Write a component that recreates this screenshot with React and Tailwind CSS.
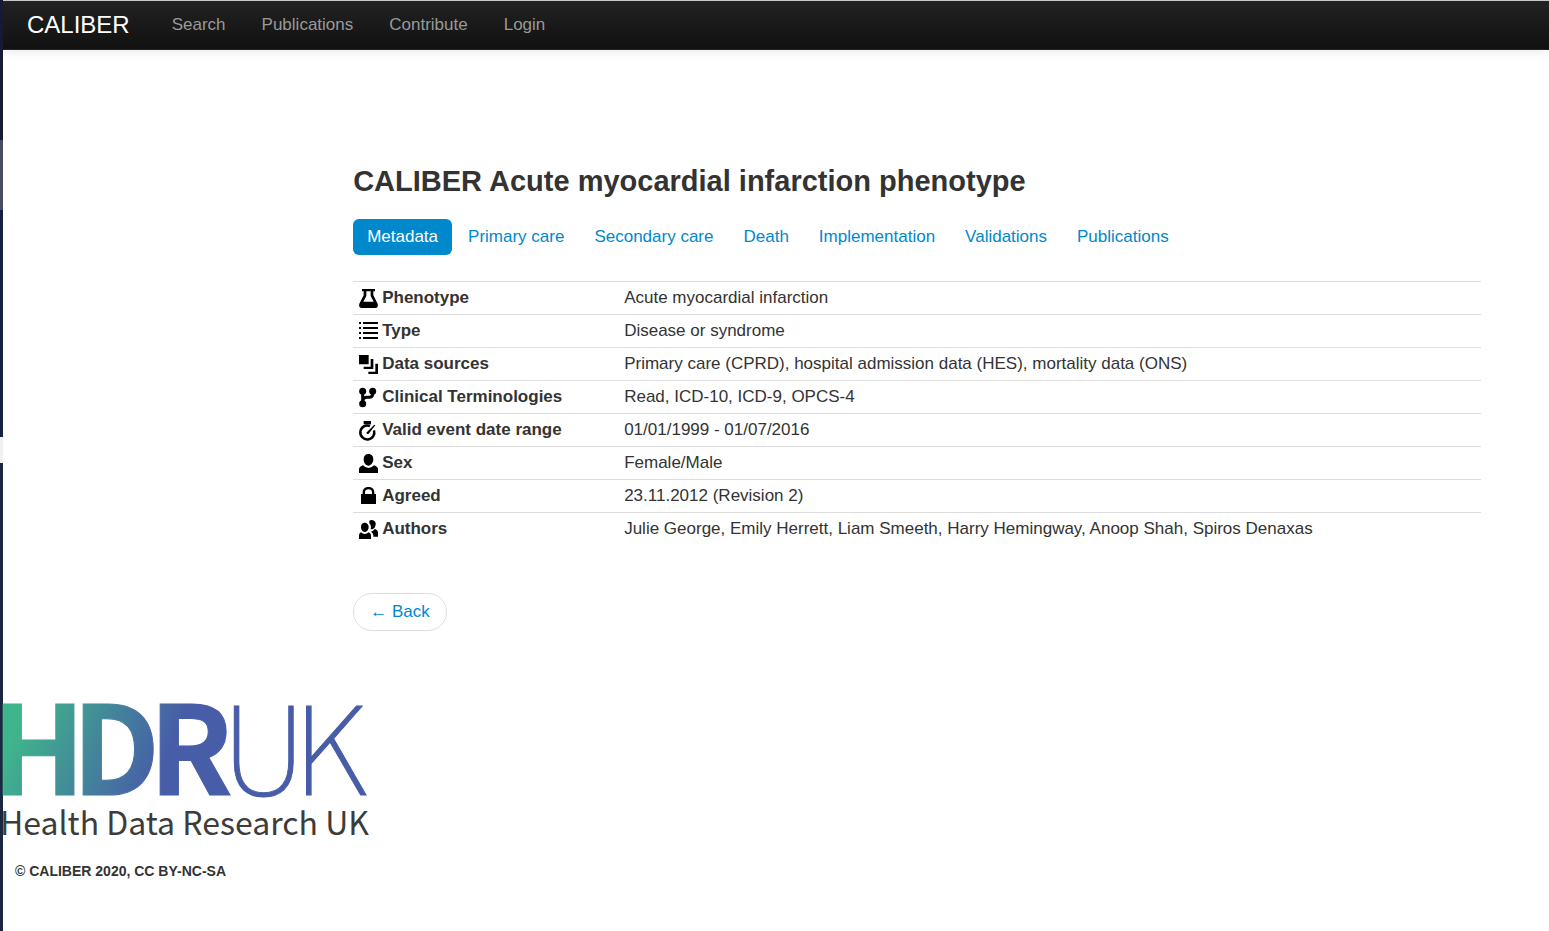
const navLinks = ["Search", "Publications", "Contribute", "Login"];

const tabs = [
  "Metadata",
  "Primary care",
  "Secondary care",
  "Death",
  "Implementation",
  "Validations",
  "Publications",
];

const icons = {
  beaker: (
    <path
      fillRule="evenodd"
      d="M9 0H48V7H43V19L56 44Q59 57 48 57H9Q-2 57 1 44L14 19V7H9ZM22 7V21L13 38H44L35 21V7Z"
    />
  ),
  list: (
    <path d="M0 0h6v6H0zM12 0h45v6H12zM0 15h6v6H0zM12 15h45v6H12zM0 30h6v6H0zM12 30h45v6H12zM0 45h6v6H0zM12 45h45v6H12z" />
  ),
  layers: <path d="M0 0H29V28H0ZM35 12H43V42H14V35H35ZM49 26H57V57H28V50H49Z" />,
  fork: (
    <g>
      <circle cx="11" cy="10" r="10.500" />
      <circle cx="41" cy="10" r="10.500" />
      <circle cx="11" cy="47" r="10.500" />
      <path d="M11 10V47M41 10V18Q41 28 31 28H22Q12 29 11 40" fill="none" stroke="#000" strokeWidth="9" />
    </g>
  ),
  timer: (
    <g>
      <path d="M14 0H36V10H14Z" />
      <path d="M33 15A21 21 0 1 0 45 28" fill="none" stroke="#000" strokeWidth="7.500" />
      <path d="M22 35L46 11L49 13L29 38Q24 41 22 35Z" />
    </g>
  ),
  user: (
    <path d="M28.500 0C38 0 43 7 43 16S37 35 28.500 35S14 26 14 16S19 0 28.500 0ZM12 34Q19 42 28.500 42T45 34Q57 38 57 46V57H0V46Q0 38 12 34Z" />
  ),
  lock: (
    <path
      fillRule="evenodd"
      d="M6 21H11V16C11 5 19 0 28.500 0S46 5 46 16V21H51V51H6ZM18 21H39V16C39 9 34 7 28.500 7S18 9 18 16Z"
    />
  ),
  people: (
    <path d="M17 8C24 8 29 13 29 21S24 36 17 36S6 29 6 21S10 8 17 8ZM6 37Q11 42 17 42T29 37Q36 40 36 46V57H0V46Q0 40 6 37ZM31 2Q36 -1 42 1C49 3 51 9 50 15Q48 25 41 28L35 28Q38 17 31 10ZM47 27Q57 30 57 38V50H43V46Q42 39 36 35Q43 33 47 27Z" />
  ),
};

const rows = [
  { icon: "beaker", label: "Phenotype", value: "Acute myocardial infarction" },
  { icon: "list", label: "Type", value: "Disease or syndrome" },
  {
    icon: "layers",
    label: "Data sources",
    value: "Primary care (CPRD), hospital admission data (HES), mortality data (ONS)",
  },
  { icon: "fork", label: "Clinical Terminologies", value: "Read, ICD-10, ICD-9, OPCS-4" },
  { icon: "timer", label: "Valid event date range", value: "01/01/1999 - 01/07/2016" },
  { icon: "user", label: "Sex", value: "Female/Male" },
  { icon: "lock", label: "Agreed", value: "23.11.2012 (Revision 2)" },
  {
    icon: "people",
    label: "Authors",
    value:
      "Julie George, Emily Herrett, Liam Smeeth, Harry Hemingway, Anoop Shah, Spiros Denaxas",
  },
];

function Icon({ name }) {
  return (
    <svg viewBox="0 0 57 57" className="h-[19px] w-[19px] shrink-0 overflow-visible" aria-hidden="true">
      {icons[name]}
    </svg>
  );
}

function EdgeStrip() {
  return (
    <div className="flex w-[3px] shrink-0 flex-col bg-[#1b2741]" aria-hidden="true">
      <div className="h-[140px] bg-[#161c38]" />
      <div className="h-[70px] bg-[#484d63]" />
      <div className="h-[227px] bg-[#15223f]" />
      <div className="h-[26px] bg-[#f0f0f0]" />
    </div>
  );
}

function Navbar() {
  return (
    <header className="flex h-[50px] items-center border-t border-b border-t-[#c5c9c7] border-b-[#252525] bg-linear-to-b from-[#222] to-[#111] pl-6 shadow-[0_1px_10px_rgba(0,0,0,0.1)]">
      <a href="#home" className="pr-6 text-2xl text-white">
        CALIBER
      </a>
      <nav className="flex">
        {navLinks.map((label) => (
          <a key={label} href={"#" + label.toLowerCase()} className="px-[18px] text-[#999]">
            {label}
          </a>
        ))}
      </nav>
    </header>
  );
}

function HdrLogo() {
  return (
    <svg
      viewBox="0 0 380 150"
      className="block h-[150px] w-[380px] overflow-visible"
      role="img"
      aria-label="Health Data Research UK"
    >
      <defs>
        <linearGradient id="hdr" gradientUnits="userSpaceOnUse" x1="15" y1="35" x2="150" y2="95">
          <stop offset="0" stopColor="#3fb58b" />
          <stop offset="1" stopColor="#475da8" />
        </linearGradient>
      </defs>
      <g fontFamily="'Noto Sans CJK SC', 'Noto Sans', sans-serif">
        <text x="-11 69 146" y="104" fontSize="123" fontWeight="700" fill="url(#hdr)" stroke="url(#hdr)">
          HDR
        </text>
        <text x="218 290" y="104" fontSize="123" fontWeight="100" fill="#475da8" stroke="#475da8">
          UK
        </text>
        <text x="-3" y="144" fontSize="32" fontWeight="400" fill="#3c3c3b">
          Health Data Research UK
        </text>
      </g>
    </svg>
  );
}

export default function App() {
  return (
    <div className="flex min-h-screen bg-white font-['Liberation_Sans',Arial,sans-serif] text-[17px] leading-6 text-[#333]">
      <EdgeStrip />
      <div className="min-w-0 flex-1">
        <Navbar />
        <main className="mr-[4.4%] ml-[22.65%] pt-[111px]">
          <h1 className="text-[29px] leading-10 font-bold">CALIBER Acute myocardial infarction phenotype</h1>
          <nav className="mt-[18px] flex flex-wrap gap-[2px]">
            {tabs.map((label, i) => (
              <a
                key={label}
                href={"#" + label.toLowerCase().replace(" ", "-")}
                className={
                  i === 0
                    ? "rounded-md bg-[#0088cc] px-[14px] py-[6px] text-white"
                    : "rounded-md px-[14px] py-[6px] text-[#0088cc]"
                }
              >
                {label}
              </a>
            ))}
          </nav>
          <table className="mt-[26px] w-full table-fixed text-left">
            <tbody>
              {rows.map((row) => (
                <tr key={row.label} className="border-t border-[#ddd]">
                  <th scope="row" className="w-[265px] p-[6px] leading-5 font-bold">
                    <span className="flex h-5 items-end gap-1">
                      <Icon name={row.icon} />
                      {row.label}
                    </span>
                  </th>
                  <td className="p-[6px] leading-5">{row.value}</td>
                </tr>
              ))}
            </tbody>
          </table>
          <a
            href="#back"
            className="mt-12 inline-block rounded-full border border-[#ddd] px-4 py-[6px] text-[#0088cc]"
          >
            ← Back
          </a>
        </main>
        <footer className="mt-[60px]">
          <HdrLogo />
          <p className="mt-5 ml-3 text-sm leading-5 font-bold">© CALIBER 2020, CC BY-NC-SA</p>
        </footer>
      </div>
    </div>
  );
}
